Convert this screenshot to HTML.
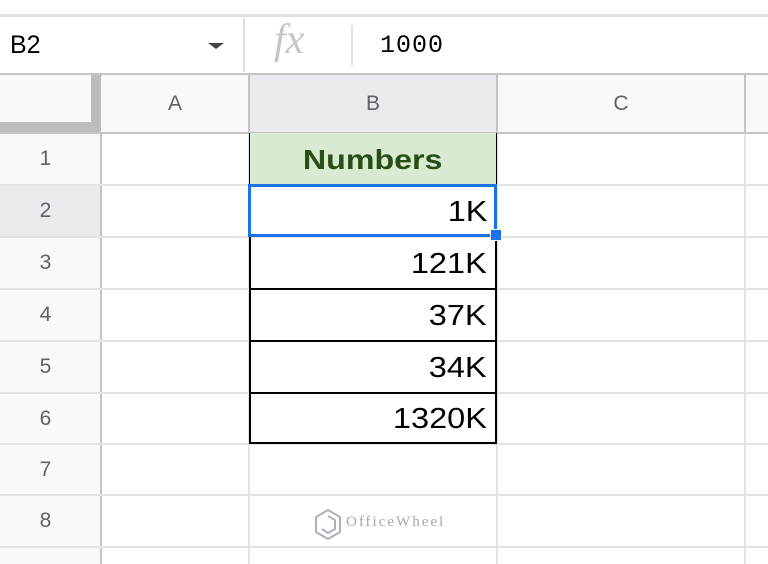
<!DOCTYPE html>
<html><head><style>
*{margin:0;padding:0;box-sizing:border-box}
body{width:768px;height:564px;overflow:hidden;background:#fff;font-family:"Liberation Sans",Arial,sans-serif;position:relative}
div{position:absolute}
.hl{left:0;width:768px;height:2px;background:#e2e3e3}
.vl{width:2px;background:#e2e3e3}
.rh{left:0;width:91px;background:#f8f9fa;color:#5f6368;font-size:21px;text-align:center}
.rhb{left:0;width:100px;background:#f8f9fa}
.ch{top:75px;height:57px;background:#f8f9fa;color:#5f6368;font-size:21px;text-align:center;line-height:57px}
.num{left:250px;width:246px;text-align:right;padding-right:9px;font-size:29px;color:#000}
.num span{display:inline-block;transform:scaleX(1.12);transform-origin:right center}
</style></head><body>
<div style="top:14px;left:0;width:768px;height:3px;background:#e0e0e0"></div>
<div style="top:31px;left:10px;font-size:25px;color:#000">B2</div>
<div style="top:43px;left:208px;width:0;height:0;border-left:8px solid transparent;border-right:8px solid transparent;border-top:6px solid #444"></div>
<div style="top:18px;left:243px;width:2px;height:54px;background:#e0e0e0"></div>
<div style="top:16px;left:274px;font-size:42px;color:#c6c6c6;font-family:'Liberation Serif',serif;font-style:italic">fx</div>
<div style="top:25px;left:351px;width:2px;height:40px;background:#e0e0e0"></div>
<div style="top:31px;left:380px;font-size:25px;color:#000;font-family:'Liberation Mono',monospace;letter-spacing:1px">1000</div>
<div style="top:73px;left:0;width:768px;height:3px;background:#c4c4c4"></div>

<div class="ch" style="left:0;width:92px;height:47px;background:#f8f9fa"></div>
<div style="top:75px;left:91px;width:10px;height:58px;background:#bdbdbd"></div>
<div style="top:122px;left:0;width:101px;height:11px;background:#bdbdbd"></div>
<div class="ch" style="left:102px;width:146px">A</div>
<div class="ch" style="left:250px;width:246px;background:#e8eaed">B</div>
<div class="ch" style="left:498px;width:246px">C</div>
<div class="ch" style="left:746px;width:22px"></div>
<div style="top:75px;left:248px;width:2px;height:58px;background:#c4c4c4"></div>
<div style="top:75px;left:496px;width:2px;height:58px;background:#c4c4c4"></div>
<div style="top:75px;left:744px;width:2px;height:58px;background:#c4c4c4"></div>
<div style="top:132px;left:0;width:768px;height:2px;background:#c4c4c4"></div>

<div class="rhb" style="top:134px;height:430px"></div>
<div class="rhb" style="top:186px;height:50px;background:#e8eaed"></div>
<div class="rh" style="top:134px;height:50px;line-height:50px">1</div>
<div class="rh" style="top:186px;height:50px;line-height:50px;background:#e8eaed">2</div>
<div class="rh" style="top:238px;height:50px;line-height:50px">3</div>
<div class="rh" style="top:290px;height:50px;line-height:50px">4</div>
<div class="rh" style="top:342px;height:50px;line-height:50px">5</div>
<div class="rh" style="top:394px;height:49px;line-height:49px">6</div>
<div class="rh" style="top:445px;height:49px;line-height:49px">7</div>
<div class="rh" style="top:496px;height:50px;line-height:50px">8</div>
<div class="rh" style="top:548px;height:16px;line-height:50px;overflow:hidden">9</div>
<div style="top:134px;left:100px;width:2px;height:430px;background:#c4c4c4"></div>

<div class="hl" style="top:184px"></div>
<div class="hl" style="top:236px"></div>
<div class="hl" style="top:288px"></div>
<div class="hl" style="top:340px"></div>
<div class="hl" style="top:392px"></div>
<div class="hl" style="top:443px"></div>
<div class="hl" style="top:494px"></div>
<div class="hl" style="top:546px"></div>
<div class="vl" style="top:134px;left:248px;height:430px"></div>
<div class="vl" style="top:134px;left:496px;height:430px"></div>
<div class="vl" style="top:134px;left:744px;height:430px"></div>

<div style="top:133px;left:249px;width:248px;height:52px;background:#d9ead3;border:1px solid #000;border-bottom:none;border-top:none"></div>
<div style="top:134px;left:250px;width:246px;height:50px;line-height:52px;text-align:center;font-size:28px;font-weight:bold;color:#274e13"><span style="display:inline-block;transform:scaleX(1.15)">Numbers</span></div>
<div style="top:236px;left:249px;width:248px;height:208px;border:2px solid #000;border-top:none"></div>
<div style="top:288px;left:249px;width:248px;height:2px;background:#000"></div>
<div style="top:340px;left:249px;width:248px;height:2px;background:#000"></div>
<div style="top:392px;left:249px;width:248px;height:2px;background:#000"></div>
<div style="top:184px;left:249px;width:1px;height:52px;background:#000"></div>
<div style="top:184px;left:496px;width:1px;height:52px;background:#000"></div>

<div class="num" style="top:186px;line-height:52px"><span>1K</span></div>
<div class="num" style="top:238px;line-height:52px"><span>121K</span></div>
<div class="num" style="top:290px;line-height:52px"><span>37K</span></div>
<div class="num" style="top:342px;line-height:52px"><span>34K</span></div>
<div class="num" style="top:394px;line-height:50px"><span>1320K</span></div>

<div style="top:184px;left:248px;width:249px;height:53px;border:3px solid #1a73e8"></div>
<div style="top:229px;left:490px;width:12px;height:12px;background:#1a73e8;border:1px solid #fff"></div>

<svg style="position:absolute;top:508px;left:313px" width="30" height="34" viewBox="0 0 30 34"><g fill="none" stroke="#aeb1bb" stroke-width="2"><path d="M15 2 L27 9 V24 L15 31 L3 24 V9 Z"/><path d="M15 8 L22 12 V21 L15 25 L9 21"/></g></svg>
<div style="top:514px;left:346px;font-size:15px;color:#a4a7b3;letter-spacing:2px;font-family:'Liberation Serif',serif">OfficeWheel</div>
</body></html>
